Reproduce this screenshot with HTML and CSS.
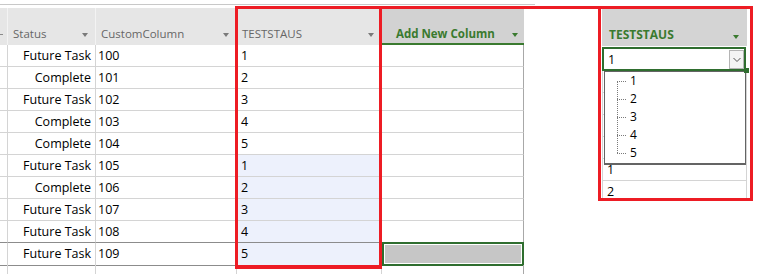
FILE: index.html
```html
<!DOCTYPE html>
<html>
<head>
<meta charset="utf-8">
<link rel="stylesheet" href="styles.css">
</head>
<body>
<div class="canvas">
  <div class="sheet">
    <div class="topline"></div>
    <div class="grid head">
      <div class="hcell stub"><span class="tail"></span></div>
      <div class="hcell"><span>Status</span><span class="tri"></span></div>
      <div class="hcell"><span>CustomColumn</span><span class="tri"></span></div>
      <div class="hcell"><span>TESTSTAUS</span><span class="tri"></span></div>
      <div class="hcell add"><span>Add New Column</span><span class="tri green"></span></div>
    </div>
    <div class="grid row"><div class="cell stub"></div><div class="cell status">Future Task</div><div class="cell">100</div><div class="cell test">1</div><div class="cell addc"></div></div>
    <div class="grid row"><div class="cell stub"></div><div class="cell status">Complete</div><div class="cell">101</div><div class="cell test">2</div><div class="cell addc"></div></div>
    <div class="grid row"><div class="cell stub"></div><div class="cell status">Future Task</div><div class="cell">102</div><div class="cell test">3</div><div class="cell addc"></div></div>
    <div class="grid row"><div class="cell stub"></div><div class="cell status">Complete</div><div class="cell">103</div><div class="cell test">4</div><div class="cell addc"></div></div>
    <div class="grid row"><div class="cell stub"></div><div class="cell status">Complete</div><div class="cell">104</div><div class="cell test">5</div><div class="cell addc"></div></div>
    <div class="grid row"><div class="cell stub"></div><div class="cell status">Future Task</div><div class="cell">105</div><div class="cell test sel">1</div><div class="cell addc"></div></div>
    <div class="grid row"><div class="cell stub"></div><div class="cell status">Complete</div><div class="cell">106</div><div class="cell test sel">2</div><div class="cell addc"></div></div>
    <div class="grid row"><div class="cell stub"></div><div class="cell status">Future Task</div><div class="cell">107</div><div class="cell test sel">3</div><div class="cell addc"></div></div>
    <div class="grid row before-dark"><div class="cell stub"></div><div class="cell status">Future Task</div><div class="cell">108</div><div class="cell test sel">4</div><div class="cell addc"></div></div>
    <div class="grid row dark"><div class="cell stub"></div><div class="cell status">Future Task</div><div class="cell">109</div><div class="cell test sel">5</div><div class="cell addc active"></div></div>
    <div class="grid row tail-row"><div class="cell stub"></div><div class="cell"></div><div class="cell"></div><div class="cell test"></div><div class="cell addc"></div></div>
  </div>

  <div class="zoom-box">
    <div class="panel">
      <div class="p-head"><span>TESTSTAUS</span><span class="tri green"></span></div>
      <div class="p-editor-row">
        <div class="editor">
          <span class="ed-val">1</span>
          <span class="ed-btn"><svg width="12" height="16" viewBox="0 0 12 16"><polyline points="2.5,7 6,10.5 9.5,7" fill="none" stroke="#555" stroke-width="1"/></svg></span>
        </div>
      </div>
      <div class="p-row"></div>
      <div class="p-row"></div>
      <div class="p-row"></div>
      <div class="p-row"></div>
      <div class="p-row">1</div>
      <div class="p-row">2</div>
      <div class="fill-handle"></div>
      <div class="dd-list">
        <div class="tree">
          <div class="item">1</div>
          <div class="item">2</div>
          <div class="item">3</div>
          <div class="item">4</div>
          <div class="item">5</div>
        </div>
      </div>
    </div>
  </div>

  <div class="mark-col"></div>
  <div class="mark-link"></div>
</div>
</body>
</html>
```

FILE: styles.css
```css
* { box-sizing: border-box; }

body {
  margin: 0;
  background: #fff;
  color: #000;
  font-family: "Open Sans", "Noto Sans", sans-serif;
}

.canvas {
  position: relative;
  width: 759px;
  height: 274px;
  overflow: hidden;
  display: flex;
  align-items: flex-start;
}

.sheet {
  width: 535px;
  padding-top: 4px;
  flex: none;
}

.topline {
  height: 1px;
  width: 535px;
  background: #c8c8c8;
  margin-bottom: 3px;
}

.grid {
  display: grid;
  grid-template-columns: 8px 88px 141px 145px 142px;
  width: 524px;
}

.head { height: 37px; }

.hcell {
  background: #e6e6e6;
  border-right: 1px solid #f3f3f3;
  display: flex;
  align-items: flex-end;
  justify-content: space-between;
  padding: 0 7px 3px 5px;
  font-size: 11.5px;
  line-height: 16px;
  color: #666;
  white-space: nowrap;
}

.hcell.stub { padding: 0 0 8px 0; border-right-color: #f3f3f3; }

.tail {
  display: block;
  width: 3px;
  height: 1px;
  background: #8a8a8a;
  margin-bottom: 2px;
}

.hcell.add {
  background: #d2d2d2;
  border-right: none;
  border-bottom: 2px solid #3a7a2f;
  color: #3a7a2f;
  font-weight: bold;
  padding: 0 6px 1px 14px;
}

.tri {
  width: 0;
  height: 0;
  border-left: 3.5px solid transparent;
  border-right: 3.5px solid transparent;
  border-top: 4px solid #7a7a7a;
  margin-bottom: 5px;
}

.tri.green { border-top-color: #3a7a2f; }

.row { height: 22px; }

.cell {
  border-right: 1px solid #d4d4d4;
  border-bottom: 1px solid #d4d4d4;
  font-size: 12.5px;
  line-height: 21px;
  padding-left: 2px;
  white-space: nowrap;
  overflow: hidden;
}

.cell.stub { padding: 0; }

.cell.status {
  text-align: right;
  padding: 0 4px 0 0;
}

.cell.test { padding-left: 4px; }

.cell.sel { background: #edf1fc; }

.cell.addc { border-right-color: #a8a8a8; }

.before-dark .cell { border-bottom-color: #8c8c8c; }
.dark .cell { border-bottom-color: #8c8c8c; }

.cell.active {
  border: 2px solid #2f6e2f;
  background: #c6c6c6;
  box-shadow: inset 0 0 0 1px #fff;
  margin-top: -1px;
  height: 24px;
}

.tail-row .cell { border-bottom: none; }

/* right zoomed panel */
.zoom-box {
  flex: none;
  margin-left: 63px;
  margin-top: 6px;
  width: 155px;
  height: 195px;
  border: 3px solid #ed1c24;
  padding: 0 3px 0 1px;
  overflow: hidden;
}

.panel {
  position: relative;
  width: 145px;
}

.p-head {
  height: 37px;
  background: #d4d4d4;
  display: flex;
  align-items: flex-end;
  justify-content: space-between;
  padding: 0 8px 3px 7px;
  color: #3a7a2f;
  font-weight: bold;
  font-size: 12px;
  line-height: 16px;
}

.p-head .tri { margin-bottom: 4px; }

.p-editor-row {
  height: 25px;
  padding-top: 1px;
}

.editor {
  width: 144px;
  height: 24px;
  border: 2px solid #2f6e2f;
  display: flex;
  align-items: center;
  justify-content: space-between;
  padding: 0 0 0 4px;
  font-size: 12.5px;
}

.ed-btn {
  width: 15px;
  height: 19px;
  border: 1px solid #b4b4b4;
  background: #f4f4f4;
  display: flex;
  align-items: center;
  justify-content: center;
}

.p-row {
  height: 22px;
  border-left: 1px solid #d4d4d4;
  border-right: 1px solid #d4d4d4;
  border-bottom: 1px solid #d4d4d4;
  font-size: 12.5px;
  line-height: 21px;
  padding-left: 4px;
}

.fill-handle {
  position: absolute;
  left: 142px;
  top: 59px;
  width: 5px;
  height: 5px;
  background: #2f6e2f;
  z-index: 2;
}

.dd-list {
  position: absolute;
  left: 2px;
  top: 62px;
  width: 142px;
  height: 94px;
  background: #fff;
  border: 1px solid #646464;
  border-bottom-width: 2px;
  z-index: 1;
}

.tree {
  position: relative;
}

.tree::before {
  content: "";
  position: absolute;
  left: 12px;
  top: 9px;
  height: 72px;
  border-left: 1px dotted #7a7a7a;
}

.item {
  position: relative;
  height: 18px;
  line-height: 18px;
  padding-left: 25px;
  font-size: 12px;
}

.item::before {
  content: "";
  position: absolute;
  left: 12px;
  top: 9px;
  width: 9px;
  border-top: 1px dotted #7a7a7a;
}

/* annotation marks */
.mark-col {
  position: absolute;
  left: 235px;
  top: 6px;
  width: 147px;
  height: 263px;
  border: 3px solid #ed1c24;
  border-bottom-width: 4px;
}

.mark-link {
  position: absolute;
  left: 382px;
  top: 6px;
  width: 216px;
  height: 3px;
  background: #ed1c24;
}
```
